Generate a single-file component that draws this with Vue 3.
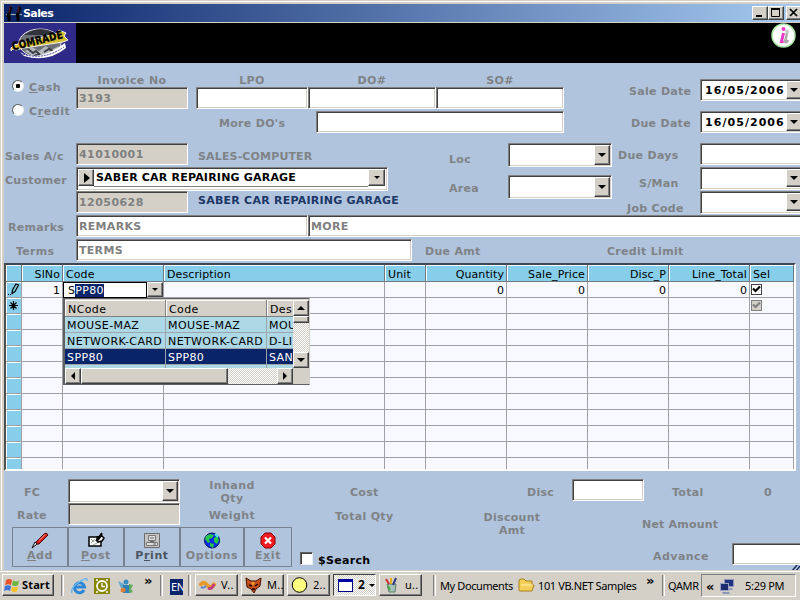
<script setup>
const cols = [
  { t: 'SlNo', c: 'r' }, { t: 'Code' }, { t: 'Description' }, { t: 'Unit' },
  { t: 'Quantity', c: 'r' }, { t: 'Sale_Price', c: 'r' }, { t: 'Disc_P', c: 'r' },
  { t: 'Line_Total', c: 'r' }, { t: 'Sel' }
]
const values = ['1', '', '', '', '0', '0', '0', '0', '']
const items = [
  ['MOUSE-MAZ', 'MOUSE-MAZ', 'MOU'],
  ['NETWORK-CARD', 'NETWORK-CARD', 'D-LI'],
  ['SPP80', 'SPP80', 'SAN'],
  ['', '', '']
]
</script>

<template>
  <div class="screen">
    <div class="window">
      <header class="titlebar">
        <svg class="ticon" width="18" height="16" viewBox="0 0 18 16">
          <path d="M0 9.500h16" stroke="#a8a8b8" stroke-width="1.200" />
          <path d="M3 16V9l2-7M12 16V9l2-7" fill="none" stroke="#000" stroke-width="3" />
          <path d="M1.500 8.500V12M10.500 8.500V12" stroke="#000" stroke-width="1.500" />
          <path d="M4 1L3 8M13 1l-1 7" stroke="#5a1824" stroke-width="1.200" />
        </svg>
        <span class="title">Sales</span>
        <span class="wbtn"><svg width="16" height="14"><path d="M4 10h6" stroke="#000" stroke-width="2" /></svg></span>
        <span class="wbtn"><svg width="16" height="14"><path d="M3.500 3v7.500h8V3M3 3h9" fill="none" stroke="#000" /><path d="M3 3h9" stroke="#000" stroke-width="2" /></svg></span>
        <span class="wbtn close"><svg width="16" height="14"><path d="M4 3l7 7M11 3l-7 7" stroke="#000" stroke-width="1.700" /></svg></span>
      </header>

      <div class="banner">
        <svg class="logo" width="72" height="40" viewBox="0 0 72 40">
          <rect width="72" height="40" fill="#2f2987" />
          <ellipse cx="36" cy="20" rx="21" ry="14" fill="#6e7278" stroke="#e8e8ec" />
          <path d="M20 12q16-12 34 0z" fill="#30343a" />
          <path d="M21 28l7-4 7 4 7-5 5 4 8-4-3 6-9 5-14-1z" fill="#b4b9be" />
          <path d="M24 26l5 4 3-2 4 4M40 29l5-3 4 2M30 33l6-2" fill="none" stroke="#3b3e44" stroke-width="2" />
          <path d="M16 29q18 11 45-9l1 5q-18 15-42 8z" fill="#fff" />
          <path d="M19 31q20 7 41-7" stroke="#44449a" stroke-dasharray="2 1" fill="none" />
          <path d="M7 25l3-3 44-12 1-3 7 3-2 3 4 4-5 2-39 6-8 2-3-1-2 2z" fill="#d8be31" stroke="#f5f2e2" />
          <text x="9" y="27.500" transform="rotate(-14 9 27)" textLength="52" lengthAdjust="spacingAndGlyphs" font-family="DejaVu Sans" font-weight="bold" font-size="11" stroke="#000" stroke-width=".4">COMRADE</text>
        </svg>
        <svg class="info" width="26" height="26" viewBox="0 0 26 26">
          <circle cx="12.500" cy="12.500" r="11.500" fill="#fff" stroke="#a8e6a0" stroke-width="1.500" />
          <path d="M16 10l-2 9q2 1 3-2" fill="none" stroke="#aaa" stroke-width="2.500" />
          <circle cx="16" cy="8.500" r="2" fill="#c9c9c9" />
          <circle cx="12.500" cy="6" r="2" fill="#ea3cc8" />
          <path d="M12.500 10L10.500 18.500h2" fill="none" stroke="#ea3cc8" stroke-width="3" />
        </svg>
      </div>

      <main class="form">
        <div class="upper">
          <div class="left">
            <div class="docs">
              <div class="radios">
                <label class="radio"><i class="dot on"></i><span><u>C</u>ash</span></label>
                <label class="radio"><i class="dot"></i><span>C<u>r</u>edit</span></label>
              </div>
              <div class="docgrid">
                <span class="cap">Invoice No</span><span></span><span class="cap">LPO</span><span class="cap">DO#</span><span class="cap">SO#</span>
                <div class="inp dis">3193</div><span></span><div class="inp"></div><div class="inp"></div><div class="inp"></div>
                <span class="more">More DO's</span><div class="inp moreinp"></div>
              </div>
            </div>
            <div class="party">
              <div class="account">
                <div class="line"><span class="lab a1">Sales A/c</span><div class="inp dis w112">41010001</div><span class="txt">SALES-COMPUTER</span></div>
                <div class="line tall"><span class="lab a1">Customer</span>
                  <div class="inp cust"><span class="btn mark"><svg width="14" height="14"><path d="M5 2v10l6-5z" /></svg></span><span class="custname">SABER CAR REPAIRING GARAGE</span><span class="btn cdrop"><i class="tri small"></i></span></div>
                </div>
                <div class="line"><span class="lab a1"></span><div class="inp dis w112">12050628</div><span class="txt navy">SABER CAR REPAIRING GARAGE</span></div>
              </div>
              <div class="area">
                <div class="line aline"><span class="lab">Loc</span><div class="inp combo"><span class="btn"><i class="tri"></i></span></div></div>
                <div class="line aline a2"><span class="lab">Area</span><div class="inp combo"><span class="btn"><i class="tri"></i></span></div></div>
              </div>
            </div>
          </div>
          <div class="right">
            <div class="line d1"><span class="lab">Sale Date</span><div class="inp combo date"><b>16/05/2006</b><span class="btn"><i class="tri"></i></span></div></div>
            <div class="line d2"><span class="lab">Due Date</span><div class="inp combo date"><b>16/05/2006</b><span class="btn"><i class="tri"></i></span></div></div>
            <div class="line d3"><span class="lab">Due Days</span><div class="inp date"></div></div>
            <div class="line d4"><span class="lab">S/Man</span><div class="inp combo date"><span class="btn"><i class="tri"></i></span></div></div>
            <div class="line d5"><span class="lab">Job Code</span><div class="inp combo date"><span class="btn"><i class="tri"></i></span></div></div>
          </div>
        </div>
        <div class="line remarks"><span class="lab">Remarks</span><div class="inp rem1">REMARKS</div><div class="inp rem2">MORE</div></div>
        <div class="line terms"><span class="lab">Terms</span><div class="inp term">TERMS</div><span class="lab due">Due Amt</span><span class="lab limit">Credit Limit</span></div>

        <section class="grid">
          <div class="row head"><span class="cell"></span><span v-for="c in cols" :key="c.t" class="cell" :class="c.c">{{ c.t }}</span></div>
          <div class="row">
            <span class="cell sel"><svg width="15" height="15"><path d="M6 11.500l.5-3.500 3.500-6 2.500 1-3.500 6.500z" fill="#87ceeb" stroke="#000" stroke-width="1.200" /><path d="M2 12.500h1M4 12.500h1" stroke="#000" /></svg></span>
            <span v-for="(v, i) in values" :key="i" class="cell" :class="cols[i].c">
              <span v-if="i === 1" class="editor"><span class="edit">S<mark>PP80</mark></span><span class="btn"><i class="tri small"></i></span></span>
              <span v-else-if="i === 8" class="check"><svg width="11" height="11"><path d="M2 4.500l2.500 2.500L9 2.500" fill="none" stroke="#000" stroke-width="2.200" /></svg></span>
              <template v-else>{{ v }}</template>
            </span>
          </div>
          <div v-for="n in 11" :key="n" class="row">
            <span class="cell sel"><svg v-if="n === 1" width="15" height="15"><path d="M7.500 3v9M3 7.500h9M4.500 4.500l6 6M10.500 4.500l-6 6" stroke="#000" stroke-width="1.200" /></svg></span>
            <span v-for="m in 9" :key="m" class="cell"><span v-if="n === 1 && m === 9" class="check off"><svg width="11" height="11"><path d="M2 4.500l2.500 2.500L9 2.500" fill="none" stroke="#808080" stroke-width="2.200" /></svg></span></span>
          </div>

          <div class="popup">
            <div class="list">
              <div class="prow phead"><span>NCode</span><span>Code</span><span>Des</span></div>
              <div v-for="(r, i) in items" :key="i" class="prow" :class="{ picked: i === 2 }"><span v-for="(v, j) in r" :key="j">{{ v }}</span></div>
            </div>
            <div class="vbar"><span class="btn"><i class="tri up"></i></span><span class="btn vthumb"></span><span class="track"></span><span class="btn"><i class="tri"></i></span></div>
            <div class="hbar"><span class="btn"><i class="tri lf"></i></span><span class="btn hthumb"></span><span class="track"></span><span class="btn"><i class="tri rt"></i></span></div>
            <div class="corner"></div>
          </div>
        </section>

        <footer class="foot">
          <div class="f1">
            <div class="fin">
              <div class="fields">
                <span class="lab fc">FC</span><div class="inp combo"><span class="btn"><i class="tri"></i></span></div>
                <span class="lab rate">Rate</span><div class="inp dis ratein"></div>
              </div>
              <div class="hand"><span>Inhand<br>Qty</span><span>Weight</span></div>
            </div>
            <nav class="tools">
              <span class="tool"><svg width="18" height="17" viewBox="0 0 18 17"><path d="M1 16l3-6 2 2z" fill="#fff" stroke="#000" /><path d="M5 10l8-8q3-2 4 1l-9 9q-3 1-3-2z" fill="#e02020" stroke="#400000" /><path d="M8 8.500l6-6" stroke="#ff9a9a" /></svg><span><u>A</u>dd</span></span>
              <span class="tool"><svg width="18" height="17" viewBox="0 0 18 17"><path d="M2 5h12v9H2z" fill="#fff" stroke="#000" stroke-width="1.500" /><path d="M4 7l3 3M4 11l4-4M6 13l6-3" stroke="#89a98c" /><path d="M9 9l3-2 3-5M10 5l5-1 2 2-2 3-4 1z" fill="#fff" stroke="#000" stroke-width="1.500" /><path d="M9 9l6-8" stroke="#000" stroke-width="1.800" /></svg><span><u>P</u>ost</span></span>
              <span class="tool strong"><svg width="18" height="17" viewBox="0 0 18 17"><path d="M1.500 1.500h15v14h-15z" fill="#c4c4c4" stroke="#6c6c6c" /><path d="M5.500 3.500h7v5h-7zM3.500 10.500h11v3h-11z" fill="#ddd" stroke="#777" /><path d="M7 6h4M10 12h3M7 9.500h4" stroke="#666" /></svg><span>P<u>r</u>int</span></span>
              <span class="tool wide"><svg width="18" height="17" viewBox="0 0 18 17"><circle cx="9" cy="8.500" r="7.500" fill="#0d2be0" stroke="#001060" /><path d="M3 4l4-2 4 1-2 3-3 1 1 3-2 1-3-4zM11 6l3-2 2 4-2 4-3-2zM7 11l4 1-1 4-3-2z" fill="#24c84a" /><path d="M12 2l3 3" stroke="#5ee" stroke-width="2" /></svg><span>Options</span></span>
              <span class="tool exit"><svg width="18" height="17" viewBox="0 0 18 17"><path d="M6 1h6l4 4v7l-4 4H6l-4-4V5z" fill="#ed1c24" stroke="#8a0000" /><path d="M6 5.500l6 6M12 5.500l-6 6" stroke="#fff" stroke-width="2.200" /></svg><span>E<u>x</u>it</span></span>
            </nav>
          </div>
          <div class="f2"><span class="cost">Cost</span><span class="tq">Total Qty</span><label class="search"><i></i>$Search</label></div>
          <div class="f3"><div class="fd"><span class="lab">Disc</span><div class="inp"></div></div><span class="damt">Discount<br>Amt</span></div>
          <div class="f4"><span class="tot">Total</span><span class="net">Net Amount</span><span class="adv">Advance</span></div>
          <div class="f5"><span>0</span><div class="inp"></div><svg width="9" height="6"><path d="M1 6l5-6M5 6l4-5" stroke="#1a2a5a" stroke-width="1.400" /></svg></div>
        </footer>
      </main>
    </div>

    <div class="taskbar">
      <span class="start"><svg width="16" height="16" viewBox="0 0 16 16"><path d="M2 3q3-2 6 0L7 8Q4 6.500 1 8z" fill="#e8542a" /><path d="M9 3.500q3 2 6 0L14 8q-3 2-6 0z" fill="#6ab53a" /><path d="M1 9q3-1.500 6 0l-1 5q-3-2-6 0z" fill="#3e74d8" /><path d="M8 9.500q3 1.500 6 0l-1 5q-3 1.500-6-.5z" fill="#f5c32c" /></svg>Start</span>
      <i class="sep s1"></i>
      <svg class="q1" width="17" height="17" viewBox="0 0 17 17"><path d="M13 12A5 5 0 1 1 13.500 9H5" fill="none" stroke="#2a86d8" stroke-width="3" /><path d="M1 15Q-1 10 8 4t8-1" fill="none" stroke="#6bb8ee" stroke-width="1.500" /></svg>
      <svg class="q2" width="16" height="16" viewBox="0 0 16 16"><rect width="16" height="16" fill="#858500" /><circle cx="8" cy="8" r="5" fill="none" stroke="#fff" stroke-width="1.800" /><path d="M8 5v3.500h3M2 2h2M12 2h2M2 14h2M12 14h2" fill="none" stroke="#fff" stroke-width="1.300" /></svg>
      <svg class="q3" width="17" height="17" viewBox="0 0 17 17"><path d="M1 3l6 3 3 6-4 2-2-4z" fill="#62a8cf" /><circle cx="9" cy="4" r="2.500" fill="#3a8dc0" /><path d="M6 7h6l2 8H6z" fill="#2f7fb8" /><path d="M12 6l4 1-2 4 2 3-4 1z" fill="#5fae5c" /><circle cx="6" cy="12" r="2.500" fill="#d9803a" /></svg>
      <span class="chev c1">»</span>
      <i class="sep s2"></i><span class="en">EN</span><i class="sep s3"></i>
      <div class="tasks">
        <span class="task"><svg width="17" height="16" viewBox="0 0 17 16"><path d="M1 9q3-6 7-1t8-2" fill="none" stroke="#e99a2c" stroke-width="4" /><path d="M9 11q4 2 6-4" fill="none" stroke="#c0407a" stroke-width="3" /><path d="M2 10q2 2 5-1" fill="none" stroke="#5a86d0" stroke-width="2" /></svg>V..</span>
        <span class="task"><svg width="17" height="16" viewBox="0 0 17 16"><path d="M1 1l5 3h5l5-3-1 8-4 3-2 4-3-4-4-2z" fill="#c8501c" stroke="#401000" /><path d="M4 8l3 1M13 7l-3 2M7 12h3" stroke="#200" stroke-width="1.500" /><path d="M6 5l2 4 2-4" fill="#f0a030" /></svg>M..</span>
        <span class="task"><svg width="17" height="16" viewBox="0 0 17 16"><circle cx="8.500" cy="8" r="7.300" fill="#ffff80" stroke="#000" /></svg>2..</span>
        <span class="task down"><svg width="17" height="16" viewBox="0 0 17 16"><rect x="1.500" y="2.500" width="14" height="12" fill="#fff" stroke="#000080" /><path d="M1 3.500h15" stroke="#0000a0" stroke-width="3" /></svg><b>2</b><i class="tri small"></i></span>
        <span class="task"><svg width="17" height="16" viewBox="0 0 17 16"><path d="M4 7h9l-1 8H6z" fill="#a8c4b8" stroke="#5a7a6a" /><path d="M6 7L3 2" stroke="#d03030" stroke-width="2" /><path d="M8 7V1" stroke="#e0b020" stroke-width="2" /><path d="M10 8l3-7" stroke="#303a80" stroke-width="2" /><path d="M5 9l2 4" stroke="#48a848" stroke-width="2" /></svg>u..</span>
      </div>
      <i class="sep s4"></i>
      <span class="docs-t">My Documents</span>
      <svg class="fold" width="17" height="15" viewBox="0 0 17 15"><path d="M1 3q0-2 2-2h3l2 2h6v4l2 0-2 6H2q-1 0-1-1z" fill="#f3cf5a" stroke="#a8801c" /><path d="M3 7h12" stroke="#fff3b0" /></svg>
      <span class="samples">101 VB.NET Samples</span>
      <span class="chev c2">»</span>
      <i class="sep s5"></i><span class="qamr">QAMR</span>
      <div class="tray"><span class="chev c3">«</span><svg width="17" height="17" viewBox="0 0 17 17"><rect x="5.500" y="1.500" width="9" height="7" fill="#23347e" stroke="#8d95bd" /><path d="M8 10h5l1 2H9z" fill="#8d95bd" /><rect x="1.500" y="5.500" width="8" height="7" fill="#1c2a6e" stroke="#9ba2c8" /><path d="M3 14h7l1 2H4z" fill="#8d95bd" /></svg><span class="clock">5:29 PM</span></div>
    </div>
  </div>
</template>

<style>
body { margin: 0; overflow: hidden; }
</style>

<style scoped>
* { box-sizing: border-box; }
.screen { width: 800px; height: 600px; overflow: hidden; background: #d4d0c8; font: bold 11px/13px "DejaVu Sans", Verdana, sans-serif; letter-spacing: .3px; color: #7f8386; white-space: nowrap; }
svg { display: block; flex: none; }
i { flex: none; }
.window { height: 570px; padding: 3px 0 0 3px; border-top: 1px solid #d4d0c8; border-left: 1px solid #d4d0c8; box-shadow: inset 1px 1px #fff; overflow: hidden; }
.titlebar { display: flex; align-items: center; height: 18px; background: linear-gradient(90deg, #0a246a, #a6caf0); color: #fff; }
.ticon { margin-left: 2px; }
.title { margin-left: -1px; flex: 1; letter-spacing: -.6px; }
.btn, .wbtn { flex: none; display: flex; align-items: center; justify-content: center; background: #d4d0c8; border: 1px solid; border-color: #fff #404040 #404040 #fff; box-shadow: inset -1px -1px #808080; }
.wbtn { width: 16px; height: 14px; }
.wbtn.close { margin: 0 -2px 0 2px; }
.wbtn svg { margin: -1px; }
.banner { display: flex; justify-content: space-between; height: 41px; border-top: 1px solid #d4d0c8; background: #000; }
.info { margin-right: 3px; }
.form { height: 507px; background: #b0c4de; overflow: hidden; }
.inp { flex: none; height: 22px; padding: 4px 0 0 2px; background: #fff; border: 1px solid; border-color: #808080 #fff #fff #808080; box-shadow: inset 1px 1px #404040, inset -1px -1px #d4d0c8; color: #808080; }
.inp.dis { background: #d4d0c8; box-shadow: inset 1px 1px #404040; letter-spacing: .45px; }
.inp.combo { display: flex; justify-content: flex-end; height: 24px; padding: 1px; }
.combo .btn { width: 16px; height: 20px; }
.tri { border: 4px solid transparent; border-top-color: #000; border-bottom: 0; width: 0; height: 0; }
.tri.small { border-width: 3px; border-bottom: 0; }
.tri.up { border: 4px solid transparent; border-bottom-color: #000; border-top: 0; }
.tri.lf { border: 4px solid transparent; border-right-color: #000; border-left: 0; }
.tri.rt { border: 4px solid transparent; border-left-color: #000; border-right: 0; }
.line { display: flex; }
.lab { flex: none; }

.upper { display: flex; height: 152px; }
.left { width: 608px; }
.right { width: 188px; }
.docs { display: flex; height: 80px; }
.radios { width: 72px; padding: 17px 0 0 8px; }
.radio { display: flex; height: 24px; letter-spacing: .6px; }
.radio span { margin: 1px 0 0 5px; }
.dot { width: 12px; height: 12px; border-radius: 50%; background: #fff; border: 1.500px solid; border-color: #606060 #eee #eee #606060; }
.dot.on { background: radial-gradient(circle, #000 2px, #fff 2.500px); }
.docgrid { display: grid; grid-template-columns: 112px 8px 112px 128px 128px; grid-template-rows: 13px 22px 21px; padding-top: 11px; }
.cap { text-align: center; letter-spacing: .4px; }
.moreinp { grid-column: 4 / 6; margin: 2px 0 0 8px; }
.more { grid-column: 1 / 4; padding: 8px 0 0 143px; }
.party { display: flex; }
.account { width: 445px; }
.account .line { height: 24px; }
.a1 { width: 72px; padding: 7px 0 0 1px; }
.w112 { width: 112px; }
.txt { margin: 7px 0 0 10px; letter-spacing: .15px; }
.navy { color: #1c3666; margin-top: 3px; letter-spacing: .24px; }
.cust { display: flex; width: 312px; height: 24px; padding: 1px; color: #000; letter-spacing: .2px; }
.mark { width: 16px; height: 17px; }
.custname { flex: 1; padding: 2px 0 0 2px; height: 18px; border-bottom: 1px solid #808080; }
.cdrop { width: 17px; height: 17px; margin-right: 1px; }
.area { width: 163px; }
.aline { height: 32px; }
.aline .lab { width: 59px; padding-top: 10px; }
.a2 .lab { padding-top: 7px; }
.aline .inp { width: 104px; }
.right { padding-top: 16px; }
.right .lab { width: 88px; }
.right .inp { width: 104px; }
.right .combo { height: 22px; justify-content: flex-start; }
.right .combo .btn { height: 18px; margin-left: auto; margin-top: 0; }
.right .d4 .combo, .right .d5 .combo { height: 23px; }
.date b { padding: 3px 0 0 3px; color: #000; letter-spacing: 1.05px; }
.d1, .d2 { height: 32px; }
.d1 .lab { padding: 6px 0 0 17px; }
.d2 .lab { padding: 6px 0 0 19px; }
.d3 { height: 24px; }
.d3 .lab { padding: 6px 0 0 6px; }
.d4, .d5 { height: 24px; }
.d4 .lab { padding: 10px 0 0 27px; }
.d5 .lab { padding: 11px 0 0 15px; }
.remarks { height: 24px; }
.remarks .lab { width: 72px; padding: 6px 0 0 4px; }
.rem1 { width: 232px; }
.rem2 { width: 504px; }
.terms { height: 24px; }
.terms .lab { width: 72px; padding: 6px 0 0 12px; }
.term { width: 336px; }
.terms .due { width: 182px; padding-left: 13px; }
.terms .limit { padding-left: 13px; }

.grid { position: relative; width: 792px; height: 208px; border: solid; border-width: 2px; border-color: #404858 #fff #fff #505050; background: #f8f8ff; font-weight: normal; color: #000; letter-spacing: .1px; }
.grid > .row { overflow: hidden; }
.row { display: grid; grid-template-columns: 16px 41px 101px 221px 41px 81px 81px 81px 81px 44px; height: 16px; }
.row:nth-child(13) { height: 11px; }
.cell { height: 16px; padding: 2px 2px 0 3px; border-right: 1px solid #a0a0a8; border-bottom: 1px solid #a0a0a8; }
.cell.sel { padding: 0; background: #87ceeb; box-shadow: inset 1px 1px #fff; }
.cell.r { text-align: right; }
.head { height: 17px; }
.head .cell { height: 17px; padding-top: 3px; background: #87ceeb; border-color: #707880; box-shadow: inset 1px 1px #fff; }
.editor { display: flex; margin: -2px -2px 0 -3px; height: 16px; }
.edit { flex: 1; border: 1px solid #000; border-width: 1px 1px 1px 1px; padding: 1px 0 0 4px; background: #fff; letter-spacing: .3px; }
.editor .btn { width: 16px; height: 15px; }
mark { background: #0a246a; color: #fff; }
.check { display: block; width: 11px; height: 11px; margin-left: -2px; background: #fff; border: 1px solid #404040; }
.check svg { margin: -1px; }
.check.off { background: #d4d0c8; border-color: #808080; }
.popup { position: absolute; z-index: 2; left: 57px; top: 33px; width: 247px; height: 87px; display: grid; grid-template: 68px 16px / 228px 16px; padding: 1px 0; border: 1px solid #606060; border-left: 2px solid #606060; border-right-color: #d4d0c8; background: #d4d0c8; letter-spacing: .4px; }
.list { overflow: hidden; }
.prow { display: grid; grid-template-columns: 101px 101px 60px; height: 16px; background: #add8e6; }
.prow span { padding: 2px 0 0 2px; height: 16px; border-right: 1px solid #9aa6ac; border-bottom: 1px solid #9aa6ac; }
.phead, .phead span { height: 17px; background: #d4d0c8; }
.phead span { padding: 3px 0 0 3px; border-color: #808080; box-shadow: inset 1px 1px #fff; }
.picked { background: #0a246a; color: #fff; }
.vbar { display: flex; flex-direction: column; }
.vbar .btn { height: 16px; }
.vbar .vthumb { height: 7px; }
.track { flex: 1; background: repeating-conic-gradient(#d4d0c8 0 25%, #fff 0 50%) 0 0 / 2px 2px; }
.hbar { display: flex; }
.hbar .btn { width: 16px; }
.hbar .hthumb { width: 147px; }

.foot { display: flex; height: 99px; }
.f1 { width: 288px; padding-top: 8px; }
.fin { display: flex; height: 48px; }
.fields { display: grid; grid-template-columns: 64px 112px; grid-template-rows: 24px 22px; }
.fc { padding: 7px 0 0 20px; }
.rate { padding: 6px 0 0 13px; }
.hand { width: 104px; text-align: center; display: flex; flex-direction: column; gap: 4px; letter-spacing: .45px; }
.tools { display: flex; margin-left: 8px; height: 40px; }
.tool { display: flex; flex-direction: column; align-items: center; width: 56px; height: 40px; padding-top: 4px; border: 1px solid #76828f; letter-spacing: .6px; }
.wide { width: 64px; }
.exit { width: 48px; }
.strong { color: #4b5460; }
.f2 { display: flex; flex-direction: column; width: 148px; }
.cost { margin: 15px 0 0 58px; }
.tq { margin: 11px 0 0 43px; }
.search { display: flex; margin: 28px 0 0 8px; color: #000; padding-top: 3px; gap: 5px; }
.search i { width: 13px; height: 13px; margin-top: -2px; background: #fff; border: solid 1px; border-color: #606060 #eee #eee #606060; box-shadow: inset 1px 1px #404040; }
.f3 { width: 204px; padding-top: 8px; }
.fd { display: flex; }
.fd .lab { width: 132px; padding: 7px 0 0 87px; }
.fd .inp { width: 72px; }
.damt { display: block; width: 144px; margin-top: 10px; text-align: center; letter-spacing: .3px; }
.f4 { display: flex; flex-direction: column; width: 88px; margin-left: 0; }
.tot { margin: 15px 0 0 28px; }
.net { margin: 19px 0 0 -2px; letter-spacing: .2px; }
.adv { margin: 19px 0 0 9px; letter-spacing: .45px; }
.f5 { width: 68px; padding-top: 15px; display: flex; flex-direction: column; }
.f5 span { margin-left: 32px; }
.f5 .inp { margin-top: 44px; width: 80px; }
.f5 svg { align-self: flex-end; margin-top: 0; }

.taskbar { display: flex; align-items: flex-start; height: 30px; padding: 4px 0 0 2px; background: linear-gradient(#d4d0c8 1px, #fff 1px, #fff 2px, #d4d0c8 2px); color: #000; font: normal 11px/16px "Noto Sans", Tahoma, sans-serif; letter-spacing: -.3px; }
.taskbar > svg { margin-top: 4px; }
.start, .task { display: flex; align-items: center; flex: none; height: 22px; border: 1px solid; border-color: #fff #404040 #404040 #fff; box-shadow: inset -1px -1px #808080; }
.start { width: 52px; font-weight: bold; gap: 2px; padding-left: 1px; letter-spacing: .15px; }
.sep { width: 3px; height: 21px; margin-top: 1px; border-left: 1px solid #808080; border-right: 1px solid #fff; flex: none; }
.s1 { margin-left: 7px; }
.taskbar > .q1 { margin-left: 7px; }
.taskbar > .q2 { margin-left: 6px; }
.taskbar > .q3 { margin-left: 7px; }
.chev { flex: none; font: bold 13px/12px "DejaVu Sans", sans-serif; letter-spacing: 0; }
.c1 { width: 16px; margin: 1px 0 0 10px; }
.en { flex: none; width: 13px; height: 16px; margin: 5px 5px 0 7px; padding-left: 1px; line-height: 15px; background: #0a246a; color: #fff; overflow: hidden; }
.tasks { display: flex; gap: 3px; margin-left: 4px; }
.task { width: 43px; gap: 5px; padding-left: 3px; letter-spacing: .3px; }
.task b { font-size: 12px; }
.down { border-color: #404040 #fff #fff #404040; box-shadow: none; background: repeating-conic-gradient(#d4d0c8 0 25%, #fff 0 50%) 0 0 / 2px 2px; gap: 4px; }
.s4 { margin-left: 11px; }
.docs-t { width: 77px; margin: 4px 0 0 4px; flex: none; letter-spacing: -.4px; }
.taskbar > .fold { margin-left: 1px; }
.samples { width: 108px; margin: 4px 0 0 3px; flex: none; letter-spacing: -.38px; }
.c2 { width: 14px; margin-top: 1px; }
.s5 { margin-left: 2px; }
.qamr { flex: none; width: 33px; margin: 4px 0 0 3px; letter-spacing: -.4px; }
.tray { display: flex; flex: none; width: 95px; height: 23px; padding: 3px 0 0 4px; border: 1px solid; border-color: #808080 #fff #fff #808080; }
.c3 { width: 13px; margin: 3px 0 0; }
.clock { margin-left: 9px; }
</style>
